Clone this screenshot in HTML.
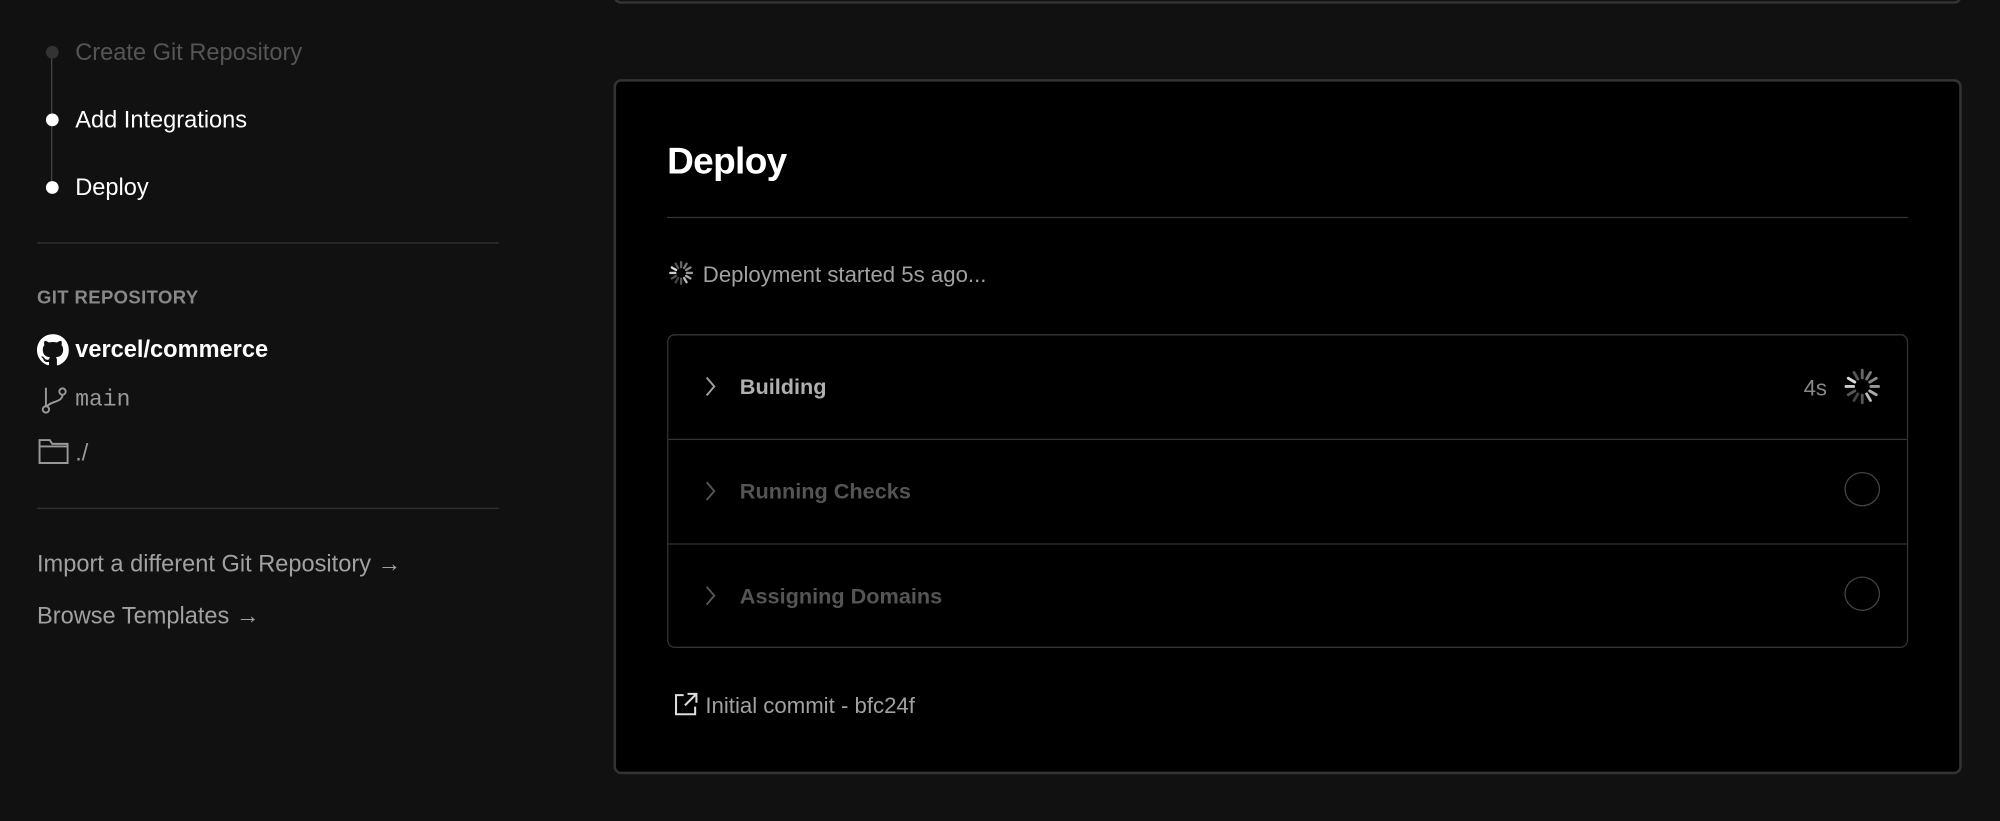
<!DOCTYPE html>
<html><head><meta charset="utf-8"><style>
*{box-sizing:border-box;margin:0;padding:0}
html,body{width:2000px;height:821px;overflow:hidden;background:#111}
#w{position:absolute;left:0;top:0;width:1568px;height:644px;transform:scale(1.27551);transform-origin:0 0;font-family:"Liberation Sans",sans-serif}
.a{position:absolute;white-space:nowrap}
.t{font-size:17.4px;line-height:20px}
.s{font-size:18.5px;line-height:20px}
.hr{position:absolute;height:1px;background:#333}
.dot{position:absolute;width:10px;height:10px;border-radius:50%;left:36px}
</style></head><body><div id="w">
<div class="a" style="left:481px;top:-10px;width:1057px;height:13px;border:2px solid #333;border-top:none;border-radius:0 0 6px 6px"></div>
<div class="a" style="left:40px;top:41px;width:1px;height:106px;background:#444"></div>
<div class="dot" style="top:36px;background:#333"></div>
<div class="dot" style="top:89px;background:#fff"></div>
<div class="dot" style="top:142px;background:#fff"></div>
<div class="a s" style="left:59px;top:31px;color:#555">Create Git Repository</div>
<div class="a s" style="left:59px;top:84px;color:#fff">Add Integrations</div>
<div class="a s" style="left:59px;top:137px;color:#fff">Deploy</div>
<div class="hr" style="left:29px;top:190px;width:362px"></div>
<div class="a" style="left:29px;top:226px;font-size:14.5px;color:#888;font-weight:bold;letter-spacing:.3px">GIT REPOSITORY</div>
<svg class="a" style="left:29px;top:262px" width="25" height="25" viewBox="0 0 16 16"><path fill="#fff" d="M8 0C3.58 0 0 3.58 0 8c0 3.540 2.29 6.53 5.47 7.59.4.07.55-.17.55-.38v-1.330c-2.23.48-2.7-1.07-2.7-1.07-.36-.92-.89-1.17-.89-1.17-.73-.5.06-.49.06-.49.8.06 1.23.83 1.23.83.71 1.22 1.87.87 2.33.66.07-.52.28-.87.51-1.07-1.78-.2-3.65-.89-3.65-3.95 0-.87.31-1.59.82-2.15-.08-.2-.36-1.02.08-2.12 0 0 .67-.21 2.2.82a7.6 7.6 0 014 0c1.53-1.04 2.2-.82 2.2-.82.44 1.1.16 1.92.08 2.12.51.56.82 1.27.82 2.15 0 3.07-1.87 3.750-3.65 3.95.29.25.54.73.54 1.48v2.2c0 .21.15.46.55.38A8 8 0 0016 8c0-4.42-3.58-8-8-8z"/></svg>
<div class="a s" style="left:59px;top:264px;color:#fff;font-weight:600">vercel/commerce</div>
<svg class="a" style="left:30px;top:302px" width="24" height="24" viewBox="0 0 24 24" fill="none" stroke="#999" stroke-width="1.5"><circle cx="6" cy="19" r="2.5"/><circle cx="19" cy="5" r="2.5"/><path d="M6 2v14.5M19 7.5c0 6-10 5-12.5 9.5"/></svg>
<div class="a" style="left:59px;top:304px;font-family:'Liberation Mono',monospace;font-size:18px;color:#999">main</div>
<svg class="a" style="left:30px;top:343px" width="24" height="22" viewBox="0 0 24 22" fill="none" stroke="#999" stroke-width="1.5"><path d="M1 2h8l2 3h12v15H1z M1 7h22"/></svg>
<div class="a s" style="left:59px;top:345px;color:#999">./</div>
<div class="hr" style="left:29px;top:398px;width:362px"></div>
<div class="a s" style="left:29px;top:432px;color:#a1a1a1">Import a different Git Repository →</div>
<div class="a s" style="left:29px;top:473px;color:#a1a1a1">Browse Templates →</div>

<div class="a" style="left:481px;top:62px;width:1057px;height:545px;border:2px solid #333;border-radius:6px;background:#000"></div>
<div class="a" style="left:523px;top:111px;font-size:29px;color:#fff;font-weight:bold;letter-spacing:-.5px">Deploy</div>
<div class="hr" style="left:523px;top:170px;width:973px"></div>
<svg class="a" style="left:524px;top:204px" width="20" height="20" viewBox="0 0 20 20" stroke-width="1.8" stroke-linecap="round"><g id="sp"><path d="M10 1.5v4" stroke="#666"/><path d="M14.3 2.7l-2 3.4" stroke="#777"/><path d="M17.3 5.7l-3.4 2" stroke="#888"/><path d="M18.5 10h-4" stroke="#999"/><path d="M17.3 14.3l-3.4-2" stroke="#aaa"/><path d="M14.3 17.3l-2-3.4" stroke="#bbb"/><path d="M10 18.5v-4" stroke="#555"/><path d="M5.7 17.3l2-3.4" stroke="#444"/><path d="M2.7 14.3l3.4-2" stroke="#555"/><path d="M1.5 10h4" stroke="#ccc"/><path d="M2.7 5.7l3.4 2" stroke="#ddd"/><path d="M5.7 2.7l2 3.4" stroke="#555"/></g></svg>
<div class="a t" style="left:551px;top:205px;color:#a1a1a1">Deployment started 5s ago...</div>
<div class="a" style="left:523px;top:262px;width:973px;height:246px;border:1px solid #333;border-radius:6px"></div>
<div class="hr" style="left:524px;top:344px;width:971px"></div>
<div class="hr" style="left:524px;top:426px;width:971px"></div>
<svg class="a" style="left:551px;top:294px" width="12" height="18" viewBox="0 0 12 18" fill="none" stroke="#a1a1a1" stroke-width="1.5"><path d="M3 2l6 7-6 7"/></svg>
<svg class="a" style="left:551px;top:376px" width="12" height="18" viewBox="0 0 12 18" fill="none" stroke="#555" stroke-width="1.5"><path d="M3 2l6 7-6 7"/></svg>
<svg class="a" style="left:551px;top:458px" width="12" height="18" viewBox="0 0 12 18" fill="none" stroke="#555" stroke-width="1.5"><path d="M3 2l6 7-6 7"/></svg>
<div class="a" style="left:580px;top:294px;font-size:17px;color:#b0b0b0;font-weight:bold">Building</div>
<div class="a" style="left:580px;top:376px;font-size:17px;color:#555;font-weight:bold">Running Checks</div>
<div class="a" style="left:580px;top:458px;font-size:17px;color:#555;font-weight:bold">Assigning Domains</div>
<div class="a t" style="left:1414px;top:294px;color:#888">4s</div>
<svg class="a" style="left:1445px;top:288px" width="30" height="30" viewBox="0 0 20 20" stroke-width="1.5" stroke-linecap="round"><use href="#sp"/></svg>
<div class="a" style="left:1446px;top:370px;width:28px;height:27px;border:1.5px solid #444;border-radius:50%"></div>
<div class="a" style="left:1446px;top:452px;width:28px;height:27px;border:1.5px solid #444;border-radius:50%"></div>
<svg class="a" style="left:528px;top:542px" width="20" height="20" viewBox="0 0 20 20" fill="none" stroke="#ddd" stroke-width="1.6"><path d="M8 3H2v15h15v-6M11 2h7v7M18 2L9 11"/></svg>
<div class="a t" style="left:553px;top:543px;color:#a1a1a1">Initial commit - bfc24f</div>
</div></body></html>
